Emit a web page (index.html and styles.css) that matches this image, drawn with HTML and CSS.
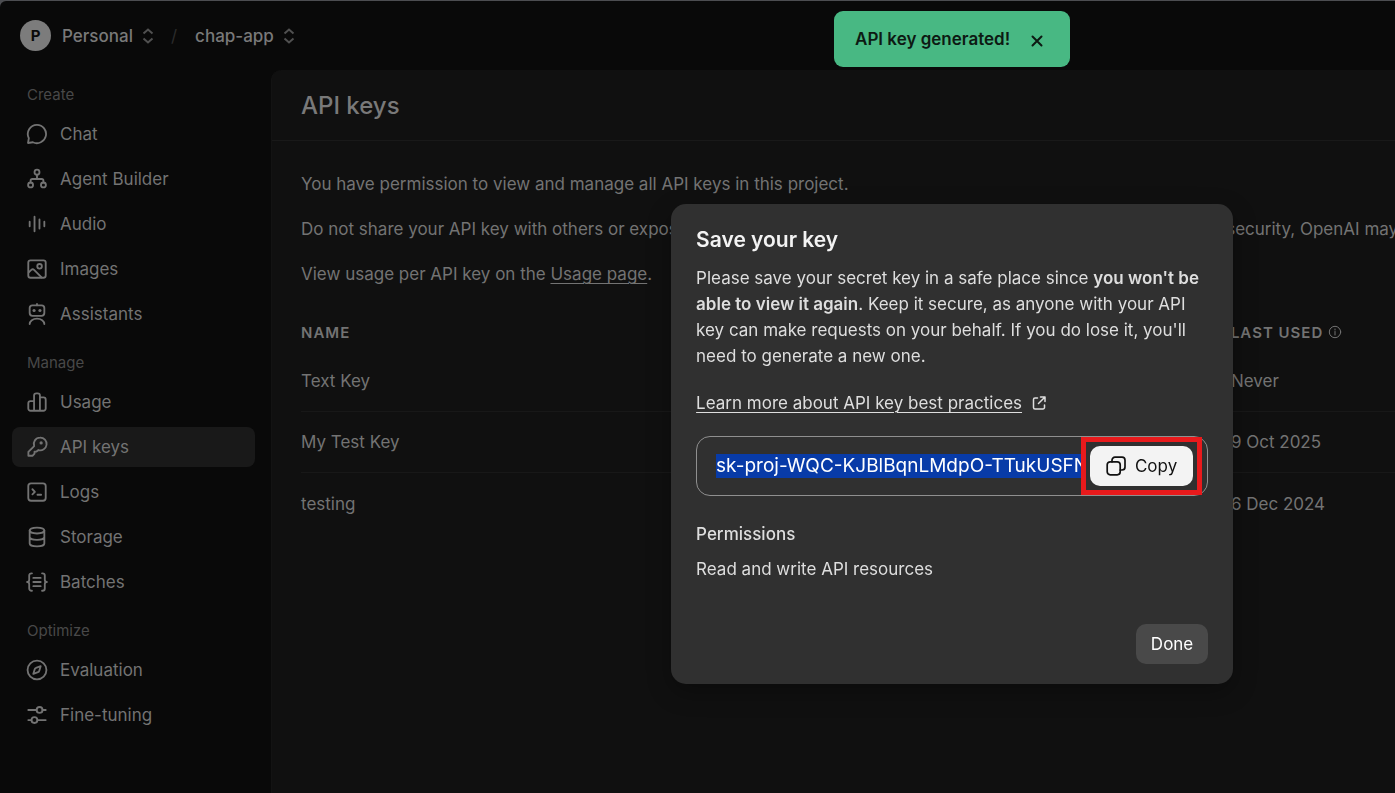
FILE: index.html
```html
<!DOCTYPE html>
<html lang="en">
<head>
    <meta charset="UTF-8">
    <meta name="viewport" content="width=device-width, initial-scale=1.0">
    <title>API keys</title>
    <link rel="stylesheet" href="styles.css">
</head>
<body>
    <div class="app">
        <header class="topbar">
            <span class="avatar">P</span>
            <button class="switcher" type="button">Personal
                <svg width="12" height="16" viewBox="0 0 12 16"><path d="M1.500 5.500 6 1.500l4.500 4M1.500 10.500l4.500 4 4.500-4"/></svg>
            </button>
            <span class="slash">/</span>
            <button class="switcher" type="button">chap-app
                <svg width="12" height="16" viewBox="0 0 12 16"><path d="M1.500 5.500 6 1.500l4.500 4M1.500 10.500l4.500 4 4.500-4"/></svg>
            </button>
        </header>

        <div class="layout">
            <nav class="sidebar">
                <div class="nav-group">
                    <h2 class="nav-title">Create</h2>
                    <a class="nav-item" href="#">
                        <svg class="icon" viewBox="0 0 24 24"><path d="M12 2a10 10 0 1 1-4.500 19L2.200 21.800l.9-5.200A10 10 0 0 1 12 2Z"/></svg>
                        Chat
                    </a>
                    <a class="nav-item" href="#">
                        <svg class="icon" viewBox="0 0 24 24"><circle cx="12" cy="4.500" r="2.700"/><circle cx="5" cy="18.500" r="2.700"/><circle cx="19" cy="18.500" r="2.700"/><path d="M12 7.200V12M5 15.800V14a2 2 0 0 1 2-2h10a2 2 0 0 1 2 2v1.800"/></svg>
                        Agent Builder
                    </a>
                    <a class="nav-item" href="#">
                        <svg class="icon" viewBox="0 0 24 24"><path d="M4 9.500v5M9.300 4v16M14.700 7v10M20 9.500v5"/></svg>
                        Audio
                    </a>
                    <a class="nav-item" href="#">
                        <svg class="icon" viewBox="0 0 24 24"><rect x="2.500" y="2.500" width="19" height="19" rx="2.500"/><circle cx="14.800" cy="9" r="2.500"/><path d="m3 15.500 2.800-2.600a2.200 2.200 0 0 1 3 0l8.200 8.300"/></svg>
                        Images
                    </a>
                    <a class="nav-item" href="#">
                        <svg class="icon" viewBox="0 0 24 24"><rect x="4" y="2.500" width="16" height="11.500" rx="3"/><path d="M12 1v1.500M4 23a8 6 0 0 1 16 0"/><circle class="dot" cx="8.800" cy="8.200" r="1.700"/><circle class="dot" cx="15.200" cy="8.200" r="1.700"/></svg>
                        Assistants
                    </a>
                </div>
                <div class="nav-group">
                    <h2 class="nav-title">Manage</h2>
                    <a class="nav-item" href="#">
                        <svg class="icon" viewBox="0 0 24 24"><path d="M8.800 21.500V5a2.500 2.500 0 0 1 2.500-2.500h1.400A2.500 2.500 0 0 1 15.200 5v16.500M8.800 11H5a2.500 2.500 0 0 0-2.500 2.500V19A2.500 2.500 0 0 0 5 21.500h14a2.500 2.500 0 0 0 2.500-2.500V9.500A2.500 2.500 0 0 0 19 7h-3.800"/></svg>
                        Usage
                    </a>
                    <a class="nav-item active" href="#">
                        <svg class="icon" viewBox="0 0 24 24"><path d="M15.300 1.800a6.900 6.900 0 1 1-1.700 13.500L11.500 17H9.300v2.200l-2 2.300H2.600v-4.200l6.300-6.200a6.900 6.900 0 0 1 6.400-9.300Z"/><circle class="dot" cx="16.500" cy="7.500" r="1.800"/></svg>
                        API keys
                    </a>
                    <a class="nav-item" href="#">
                        <svg class="icon" viewBox="0 0 24 24"><rect x="2.500" y="2.500" width="19" height="19" rx="3"/><path d="m7 9 2.700 2.800L7 14.500M12.500 15h4"/></svg>
                        Logs
                    </a>
                    <a class="nav-item" href="#">
                        <svg class="icon" viewBox="0 0 24 24"><ellipse cx="12" cy="5" rx="8" ry="3.200"/><path d="M4 5v14c0 1.800 3.600 3.200 8 3.200s8-1.400 8-3.200V5M4 12c0 1.800 3.600 3.200 8 3.200s8-1.400 8-3.200"/></svg>
                        Storage
                    </a>
                    <a class="nav-item" href="#">
                        <svg class="icon" viewBox="0 0 24 24"><path d="M6.500 2.500H6A2.500 2.500 0 0 0 3.500 5v4.500c0 1.500-.8 2.500-2.300 2.500 1.500 0 2.300 1 2.300 2.500V19A2.500 2.500 0 0 0 6 21.500h.5M17.500 2.500h.5A2.500 2.500 0 0 1 20.500 5v4.500c0 1.500.8 2.500 2.300 2.500-1.500 0-2.300 1-2.300 2.500V19a2.500 2.500 0 0 1-2.500 2.500h-.5M8 7.500h8M8 12h8M8 16.500h8"/></svg>
                        Batches
                    </a>
                </div>
                <div class="nav-group">
                    <h2 class="nav-title">Optimize</h2>
                    <a class="nav-item" href="#">
                        <svg class="icon" viewBox="0 0 24 24"><circle cx="12" cy="12" r="10.300"/><path d="m16 7.800-1.600 5.300a2 2 0 0 1-1.300 1.300L8 16.200l1.600-5.300a2 2 0 0 1 1.300-1.300Z"/></svg>
                        Evaluation
                    </a>
                    <a class="nav-item" href="#">
                        <svg class="icon" viewBox="0 0 24 24"><path d="M2.500 6.500h9M18 6.500h3.500M2.500 17.500H6M12.500 17.500h9"/><circle cx="14.800" cy="6.500" r="3.200"/><circle cx="9.200" cy="17.500" r="3.200"/></svg>
                        Fine-tuning
                    </a>
                </div>
            </nav>

            <main class="content">
                <div class="content-header">
                    <h1>API keys</h1>
                </div>
                <div class="content-body">
                    <p>You have permission to view and manage all API keys in this project.</p>
                    <p>Do not share your API key with others or expose it in a browser or other client side code. To protect your account's security, OpenAI may</p>
                    <p>View usage per API key on the <a href="#">Usage page</a>.</p>

                    <table class="keys">
                        <thead>
                            <tr>
                                <th class="col-name">Name</th>
                                <th>Last used
                                    <svg class="info" viewBox="0 0 14 14"><circle cx="7" cy="7" r="5.700"/><path d="M7 6.500V10M7 4v1"/></svg>
                                </th>
                            </tr>
                        </thead>
                        <tbody>
                            <tr><td>Text Key</td><td>Never</td></tr>
                            <tr><td>My Test Key</td><td>9 Oct 2025</td></tr>
                            <tr><td>testing</td><td>6 Dec 2024</td></tr>
                        </tbody>
                    </table>
                </div>
            </main>
        </div>
    </div>

    <div class="overlay toast-layer">
        <div class="toast" role="status">
            <span>API key generated!</span>
            <button class="toast-close" type="button" aria-label="Close">
                <svg width="12" height="12" viewBox="0 0 12 12"><path d="m1.500 1.500 9 9M10.500 1.500l-9 9"/></svg>
            </button>
        </div>
    </div>

    <div class="overlay modal-layer">
        <div class="modal" role="dialog" aria-labelledby="modal-title">
            <h2 id="modal-title">Save your key</h2>
            <p class="modal-text">Please save your secret key in a safe place since <strong>you won't be able to view it again</strong>. Keep it secure, as anyone with your API key can make requests on your behalf. If you do lose it, you'll need to generate a new one.</p>
            <div class="learn-more">
                <a href="#">Learn more about API key best practices</a>
                <svg width="14" height="14" viewBox="0 0 14 14"><path d="M5.500 2H3a1.500 1.500 0 0 0-1.500 1.500v8A1.500 1.500 0 0 0 3 13h8a1.500 1.500 0 0 0 1.500-1.500V9M8.500 1H13v4.500M13 1 6.500 7.500"/></svg>
            </div>
            <div class="key-box">
                <input id="key" class="key-input" type="text" aria-label="Secret key" value="sk-proj-WQC-KJBlBqnLMdpO-TTukUSFN" readonly>
                <div class="copy-wrap">
                    <button class="copy-btn" type="button">
                        <svg width="20" height="20" viewBox="0 0 20 20"><rect x="1.200" y="5.800" width="13" height="13" rx="3"/><path d="M6 5.800V4.200a3 3 0 0 1 3-3h7a3 3 0 0 1 3 3V11a3 3 0 0 1-3 3h-1.800"/></svg>
                        Copy
                    </button>
                </div>
            </div>
            <h3>Permissions</h3>
            <p class="permissions">Read and write API resources</p>
            <div class="modal-actions">
                <button class="done-btn" type="button">Done</button>
            </div>
        </div>
    </div>

    <script>
        // Select the key so it can be copied straight away
        const keyInput = document.getElementById('key');
        keyInput.focus();
        keyInput.setSelectionRange(0, keyInput.value.length, 'backward');
        keyInput.scrollLeft = 0;
    </script>
</body>
</html>
```
FILE: styles.css
```css
* {
    box-sizing: border-box;
}
html {
    background-color: #4c4d51;
}
body {
    margin: 0;
    font-family: Inter, "Liberation Sans", sans-serif;
    font-size: 17px;
    line-height: 24px;
    color: #737373;
    overflow: hidden;
}
h1, h2, h3, p {
    margin: 0;
}
a {
    color: inherit;
}
button {
    font: inherit;
    color: inherit;
    border: none;
    background: none;
    padding: 0;
    cursor: pointer;
}
svg {
    fill: none;
    stroke: currentColor;
    stroke-width: 2;
    stroke-linecap: round;
    stroke-linejoin: round;
    flex-shrink: 0;
}
.app {
    display: flex;
    flex-direction: column;
    min-height: calc(100vh - 1px);
    margin-top: 1px;
    background-color: #090909;
    border-top-left-radius: 6px;
}

/* Top bar */
.topbar {
    display: flex;
    align-items: center;
    height: 69px;
    padding-left: 20px;
}
.avatar {
    width: 31px;
    height: 31px;
    margin-right: 11px;
    border-radius: 50%;
    background-color: #7c7c7c;
    color: #0a0a0a;
    font-size: 15px;
    font-weight: 700;
    line-height: 31px;
    text-align: center;
}
.switcher {
    display: flex;
    align-items: center;
    gap: 9px;
    font-weight: 500;
    color: #797979;
}
.switcher svg {
    color: #505050;
    stroke-linecap: butt;
    stroke-linejoin: miter;
}
.slash {
    margin: 0 18px 0 17px;
    color: #2c2c2c;
}

/* Sidebar */
.layout {
    display: flex;
    flex: 1;
}
.sidebar {
    width: 271px;
    flex-shrink: 0;
    padding: 13px 16px 0 12px;
}
.nav-group {
    display: flex;
    flex-direction: column;
    gap: 5px;
    margin-bottom: 17px;
}
.nav-title {
    margin: 0 0 2px 15px;
    font-size: 15px;
    font-weight: 400;
    line-height: 24px;
    color: #484848;
}
.nav-item {
    display: flex;
    align-items: center;
    gap: 12px;
    height: 40px;
    padding-left: 14px;
    border-radius: 8px;
    text-decoration: none;
}
.nav-item.active {
    background-color: #191919;
}
.icon {
    width: 22px;
    height: 22px;
}
.dot {
    fill: currentColor;
    stroke: none;
}

/* Page content */
.content {
    flex: 1;
    min-width: 0;
    overflow: hidden;
    background-color: #101010;
    border-left: 1px solid #131313;
    border-top-left-radius: 10px;
}
.content-header {
    display: flex;
    align-items: center;
    height: 71px;
    padding: 2px 0 0 29px;
    border-bottom: 1px solid #191919;
}
h1 {
    font-size: 24px;
    font-weight: 500;
    line-height: 32px;
    color: #797979;
}
.content-body {
    padding: 31px 0 0 29px;
}
.content-body p {
    margin-bottom: 20px;
    line-height: 25px;
    white-space: nowrap;
}
.content-body a {
    text-underline-offset: 3px;
    text-decoration-thickness: 1px;
}
.keys {
    width: 100%;
    margin-top: 28px;
    border-spacing: 0;
    table-layout: fixed;
}
.keys th,
.keys td {
    padding: 0;
    text-align: left;
}
.keys th {
    height: 36px;
    font-size: 15px;
    font-weight: 600;
    letter-spacing: 1px;
    text-transform: uppercase;
}
.keys td {
    height: 61px;
    border-bottom: 1px solid #181818;
}
.keys tr:last-child td {
    border-bottom: none;
}
.col-name {
    width: 85%;
}
.info {
    width: 14px;
    height: 14px;
    stroke-width: 1;
    vertical-align: -1px;
}

/* Toast and modal share the same centre line */
.overlay {
    position: fixed;
    left: 0;
    right: 0;
    display: flex;
    justify-content: center;
    padding-left: 36.5%;
}
.toast-layer {
    top: 11px;
}
.toast {
    display: flex;
    align-items: center;
    gap: 21px;
    height: 56px;
    padding: 0 27px 0 21px;
    border-radius: 9px;
    background-color: #48b883;
    color: #0d1a13;
    font-weight: 600;
}
.toast-close {
    display: flex;
    padding-top: 4px;
}
.modal-layer {
    top: 204px;
}
.modal {
    width: 562px;
    padding: 22px 25px 20px;
    border-radius: 15px;
    background-color: #303030;
    box-shadow: 0 8px 24px rgba(0, 0, 0, 0.3);
    color: #dedede;
}
.modal h2 {
    font-size: 21px;
    font-weight: 600;
    line-height: 28px;
    color: #f3f3f3;
}
.modal-text {
    margin-top: 11px;
    line-height: 26px;
}
.modal-text strong {
    font-weight: 600;
}
.learn-more {
    display: flex;
    align-items: center;
    gap: 10px;
    margin-top: 22px;
}
.learn-more a {
    text-underline-offset: 3px;
    text-decoration-thickness: 1px;
}
.learn-more svg {
    stroke-width: 1.5;
}
.key-box {
    display: flex;
    align-items: center;
    height: 60px;
    margin-top: 21px;
    padding: 0 14px 0 19px;
    border: 1px solid #8f8f8f;
    border-radius: 14px;
}
.key-input {
    flex: 1;
    min-width: 0;
    height: 24px;
    margin-right: 9px;
    padding: 0;
    border: none;
    outline: none;
    background: none;
    color: #fff;
    font: inherit;
    font-size: 19px;
    line-height: 24px;
}
.key-input::selection {
    background-color: rgba(8, 60, 170, 0.99);
    color: #fff;
}
.copy-wrap {
    position: relative;
}
.copy-wrap::after {
    content: "";
    position: absolute;
    inset: -9px;
    border: 5px solid #e81a1c;
    pointer-events: none;
}
.copy-btn {
    display: flex;
    align-items: center;
    justify-content: center;
    gap: 9px;
    width: 103px;
    height: 40px;
    border-radius: 10px;
    background-color: #f3f3f3;
    color: #111;
}
.copy-btn svg {
    stroke-width: 1.700;
}
.modal h3 {
    margin-top: 26px;
    font-size: 17px;
    font-weight: 500;
}
.permissions {
    margin-top: 11px;
}
.modal-actions {
    display: flex;
    justify-content: flex-end;
    margin-top: 43px;
}
.done-btn {
    width: 72px;
    height: 40px;
    border-radius: 10px;
    background-color: #494949;
    color: #fff;
}
```
